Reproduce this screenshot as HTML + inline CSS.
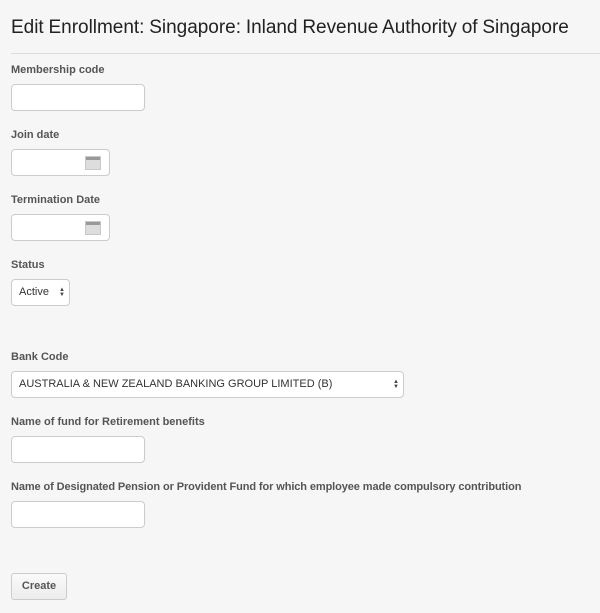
<!DOCTYPE html>
<html><head><meta charset="utf-8"><style>
html,body{margin:0;padding:0;width:600px;height:613px;background:#f6f6f6;overflow:hidden;font-family:"Liberation Sans",Arial,sans-serif;position:relative}
h1{position:absolute;left:11px;top:17px;margin:0;font-size:19px;font-weight:normal;color:#222;white-space:nowrap;letter-spacing:-0.02px;word-spacing:-0.4px}
.hr{position:absolute;left:11px;right:0;top:53px;height:1px;background:#ddd}
.l{position:absolute;left:11px;font-size:11px;font-weight:bold;color:#555;line-height:14px;white-space:nowrap}
.i{position:absolute;left:11px;background:#fff;border:1px solid #ccc;border-radius:4px;box-sizing:border-box;height:27px}
.cal{position:absolute;right:8px;top:6px;width:16px;height:14px;background:#ddd;border:1px solid #c8c8c8;box-sizing:border-box}
.cal:before{content:"";position:absolute;left:0;right:0;top:0;height:3px;background:#999}
.s{font-size:11px;color:#333;line-height:25px;padding-left:7px;white-space:nowrap}
.ar{position:absolute;right:4px;top:8px;font-size:6px;line-height:5px;color:#444}
.btn{position:absolute;left:11px;top:573px;width:56px;height:27px;box-sizing:border-box;border:1px solid #ccc;border-radius:3px;background:linear-gradient(#fafafa,#ececec);font-size:11px;font-weight:bold;color:#555;text-align:center;line-height:25px}
</style></head><body>
<h1>Edit Enrollment: Singapore: Inland Revenue Authority of Singapore</h1>
<div class="hr"></div>
<div class="l" style="top:63px">Membership code</div>
<div class="i" style="top:84px;width:134px"></div>
<div class="l" style="top:128px">Join date</div>
<div class="i" style="top:149px;width:99px"><div class="cal"></div></div>
<div class="l" style="top:193px">Termination Date</div>
<div class="i" style="top:214px;width:99px"><div class="cal"></div></div>
<div class="l" style="top:258px">Status</div>
<div class="i s" style="top:279px;width:59px">Active<div class="ar">▲<br>▼</div></div>
<div class="l" style="top:350px">Bank Code</div>
<div class="i s" style="top:371px;width:393px">AUSTRALIA &amp; NEW ZEALAND BANKING GROUP LIMITED (B)<div class="ar">▲<br>▼</div></div>
<div class="l" style="top:415px">Name of fund for Retirement benefits</div>
<div class="i" style="top:436px;width:134px"></div>
<div class="l" style="top:480px;letter-spacing:-0.1px">Name of Designated Pension or Provident Fund for which employee made compulsory contribution</div>
<div class="i" style="top:501px;width:134px"></div>
<div class="btn">Create</div>
</body></html>
